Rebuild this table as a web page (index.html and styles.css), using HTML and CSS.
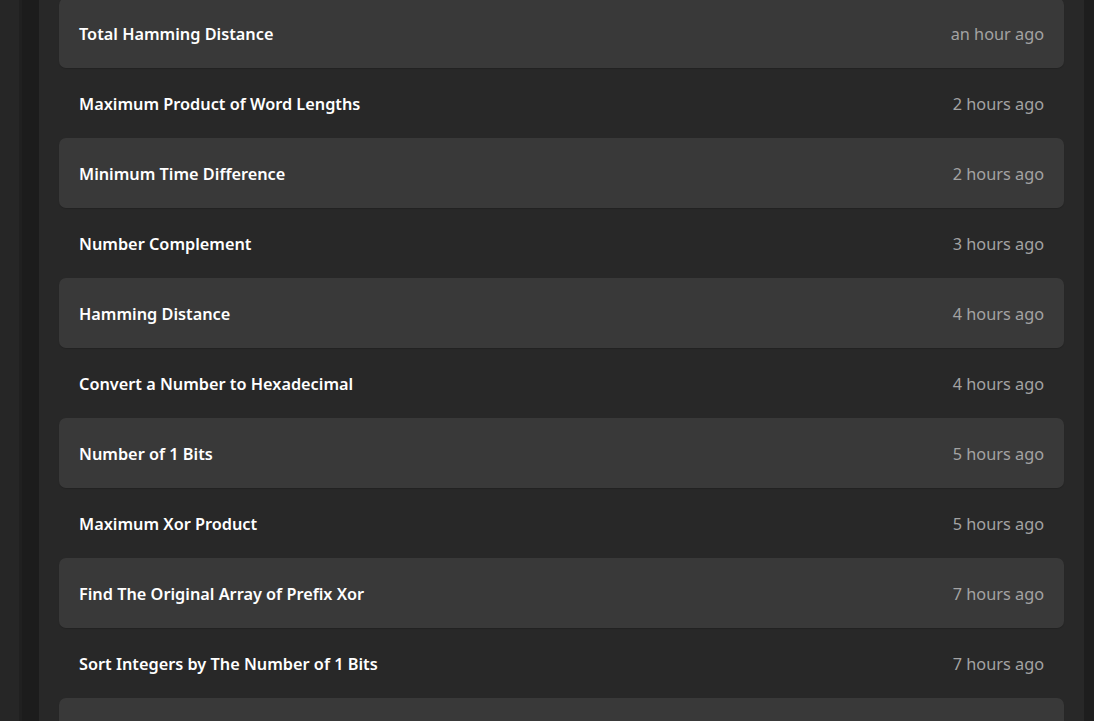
FILE: index.html
```html
<!DOCTYPE html>
<html lang="en">
<head>
<meta charset="UTF-8">
<title>Recent Submissions</title>
<meta name="viewport" content="width=device-width, initial-scale=1.0">
<link rel="stylesheet" href="styles.css">
</head>
<body>

<div class="app">
    <div class="rail"></div>
    <div class="rail-edge"></div>

    <!-- RECENT LIST -->
    <div class="panel">
        <div class="list">
            <div class="row"><span class="name">Total Hamming Distance</span><span class="time">an hour ago</span></div>
            <div class="row"><span class="name">Maximum Product of Word Lengths</span><span class="time">2 hours ago</span></div>
            <div class="row"><span class="name">Minimum Time Difference</span><span class="time">2 hours ago</span></div>
            <div class="row"><span class="name">Number Complement</span><span class="time">3 hours ago</span></div>
            <div class="row"><span class="name">Hamming Distance</span><span class="time">4 hours ago</span></div>
            <div class="row"><span class="name">Convert a Number to Hexadecimal</span><span class="time">4 hours ago</span></div>
            <div class="row"><span class="name">Number of 1 Bits</span><span class="time">5 hours ago</span></div>
            <div class="row"><span class="name">Maximum Xor Product</span><span class="time">5 hours ago</span></div>
            <div class="row"><span class="name">Find The Original Array of Prefix Xor</span><span class="time">7 hours ago</span></div>
            <div class="row"><span class="name">Sort Integers by The Number of 1 Bits</span><span class="time">7 hours ago</span></div>
            <div class="row"></div>
        </div>
    </div>

    <div class="side"></div>
</div>

</body>
</html>
```

FILE: styles.css
```css
body {
    margin: 0;
    height: 721px;
    overflow: hidden;
    background: #262626;
    font-family: "Noto Sans", "Open Sans", sans-serif;
}

.app {
    display: flex;
    height: 100%;
}

/* LEFT RAILS */
.rail {
    width: 19px;
    background: #262626;
}

.rail-edge {
    width: 20px;
    background: #1c1c1c;
    border-left: 3px solid #202020;
    box-sizing: border-box;
}

/* PANEL */
.panel {
    flex: 1;
    background: #282828;
    padding: 0 20px;
    overflow: hidden;
}

.side {
    width: 10px;
    background: #1e1e1e;
}

.list {
    margin-top: -2px;
}

/* ROW */
.row {
    display: flex;
    justify-content: space-between;
    align-items: center;
    box-sizing: border-box;
    height: 70px;
    padding: 2px 20px 0;
    border-radius: 7px;
}

.row:nth-child(odd) {
    background: #393939;
    box-shadow: 0 1px 1px rgba(0,0,0,0.15);
}

.name {
    color: #ffffff;
    font-size: 16.3px;
    font-weight: 600;
}

.time {
    color: #a3a3a3;
    font-size: 16.3px;
}
```
